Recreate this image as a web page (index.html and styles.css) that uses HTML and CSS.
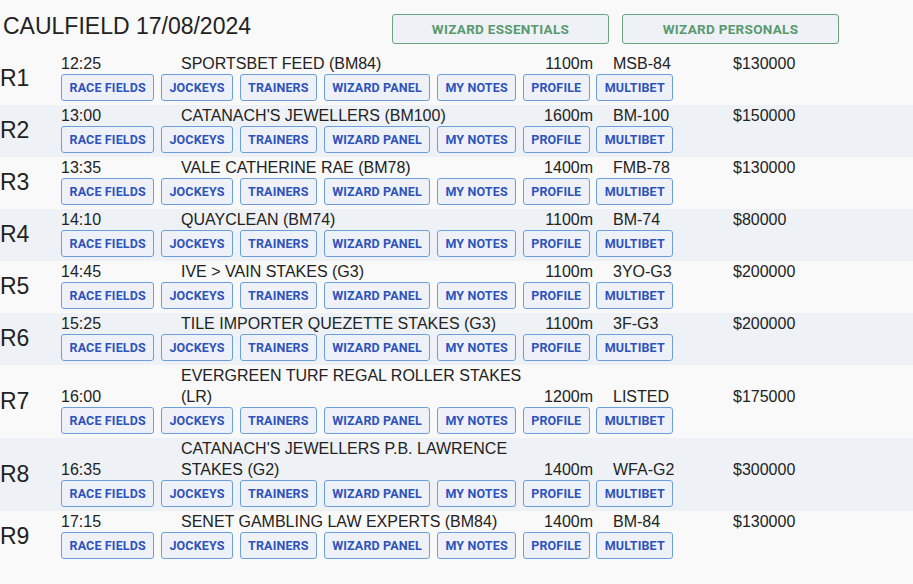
FILE: index.html
```html
<!DOCTYPE html>
<html>
<head>
<meta charset="utf-8">
<link rel="stylesheet" href="styles.css">
</head>
<body>
<div class="page">
  <header class="top">
    <h1 class="title">CAULFIELD 17/08/2024</h1>
    <div class="wiz">
      <button class="wbtn">WIZARD ESSENTIALS</button>
      <button class="wbtn">WIZARD PERSONALS</button>
    </div>
  </header>

  <div class="race">
    <div class="rno">R1</div>
    <div class="body">
      <div class="info"><span class="time">12:25</span><span class="name">SPORTSBET FEED (BM84)</span><span class="dist">1100m</span><span class="cls">MSB-84</span><span class="prize">$130000</span></div>
      <div class="btns"><button class="b">RACE FIELDS</button><button class="b">JOCKEYS</button><button class="b">TRAINERS</button><button class="b">WIZARD PANEL</button><button class="b">MY NOTES</button><button class="b">PROFILE</button><button class="b">MULTIBET</button></div>
    </div>
  </div>

  <div class="race alt">
    <div class="rno">R2</div>
    <div class="body">
      <div class="info"><span class="time">13:00</span><span class="name">CATANACH'S JEWELLERS (BM100)</span><span class="dist">1600m</span><span class="cls">BM-100</span><span class="prize">$150000</span></div>
      <div class="btns"><button class="b">RACE FIELDS</button><button class="b">JOCKEYS</button><button class="b">TRAINERS</button><button class="b">WIZARD PANEL</button><button class="b">MY NOTES</button><button class="b">PROFILE</button><button class="b">MULTIBET</button></div>
    </div>
  </div>

  <div class="race">
    <div class="rno">R3</div>
    <div class="body">
      <div class="info"><span class="time">13:35</span><span class="name">VALE CATHERINE RAE (BM78)</span><span class="dist">1400m</span><span class="cls">FMB-78</span><span class="prize">$130000</span></div>
      <div class="btns"><button class="b">RACE FIELDS</button><button class="b">JOCKEYS</button><button class="b">TRAINERS</button><button class="b">WIZARD PANEL</button><button class="b">MY NOTES</button><button class="b">PROFILE</button><button class="b">MULTIBET</button></div>
    </div>
  </div>

  <div class="race alt">
    <div class="rno">R4</div>
    <div class="body">
      <div class="info"><span class="time">14:10</span><span class="name">QUAYCLEAN (BM74)</span><span class="dist">1100m</span><span class="cls">BM-74</span><span class="prize">$80000</span></div>
      <div class="btns"><button class="b">RACE FIELDS</button><button class="b">JOCKEYS</button><button class="b">TRAINERS</button><button class="b">WIZARD PANEL</button><button class="b">MY NOTES</button><button class="b">PROFILE</button><button class="b">MULTIBET</button></div>
    </div>
  </div>

  <div class="race">
    <div class="rno">R5</div>
    <div class="body">
      <div class="info"><span class="time">14:45</span><span class="name">IVE &gt; VAIN STAKES (G3)</span><span class="dist">1100m</span><span class="cls">3YO-G3</span><span class="prize">$200000</span></div>
      <div class="btns"><button class="b">RACE FIELDS</button><button class="b">JOCKEYS</button><button class="b">TRAINERS</button><button class="b">WIZARD PANEL</button><button class="b">MY NOTES</button><button class="b">PROFILE</button><button class="b">MULTIBET</button></div>
    </div>
  </div>

  <div class="race alt">
    <div class="rno">R6</div>
    <div class="body">
      <div class="info"><span class="time">15:25</span><span class="name">TILE IMPORTER QUEZETTE STAKES (G3)</span><span class="dist">1100m</span><span class="cls">3F-G3</span><span class="prize">$200000</span></div>
      <div class="btns"><button class="b">RACE FIELDS</button><button class="b">JOCKEYS</button><button class="b">TRAINERS</button><button class="b">WIZARD PANEL</button><button class="b">MY NOTES</button><button class="b">PROFILE</button><button class="b">MULTIBET</button></div>
    </div>
  </div>

  <div class="race">
    <div class="rno">R7</div>
    <div class="body">
      <div class="info"><span class="time">16:00</span><span class="name">EVERGREEN TURF REGAL ROLLER STAKES (LR)</span><span class="dist">1200m</span><span class="cls">LISTED</span><span class="prize">$175000</span></div>
      <div class="btns"><button class="b">RACE FIELDS</button><button class="b">JOCKEYS</button><button class="b">TRAINERS</button><button class="b">WIZARD PANEL</button><button class="b">MY NOTES</button><button class="b">PROFILE</button><button class="b">MULTIBET</button></div>
    </div>
  </div>

  <div class="race alt">
    <div class="rno">R8</div>
    <div class="body">
      <div class="info"><span class="time">16:35</span><span class="name">CATANACH'S JEWELLERS P.B. LAWRENCE STAKES (G2)</span><span class="dist">1400m</span><span class="cls">WFA-G2</span><span class="prize">$300000</span></div>
      <div class="btns"><button class="b">RACE FIELDS</button><button class="b">JOCKEYS</button><button class="b">TRAINERS</button><button class="b">WIZARD PANEL</button><button class="b">MY NOTES</button><button class="b">PROFILE</button><button class="b">MULTIBET</button></div>
    </div>
  </div>

  <div class="race">
    <div class="rno">R9</div>
    <div class="body">
      <div class="info"><span class="time">17:15</span><span class="name">SENET GAMBLING LAW EXPERTS (BM84)</span><span class="dist">1400m</span><span class="cls">BM-84</span><span class="prize">$130000</span></div>
      <div class="btns"><button class="b">RACE FIELDS</button><button class="b">JOCKEYS</button><button class="b">TRAINERS</button><button class="b">WIZARD PANEL</button><button class="b">MY NOTES</button><button class="b">PROFILE</button><button class="b">MULTIBET</button></div>
    </div>
  </div>
</div>
</body>
</html>
```

FILE: styles.css
```css
* { box-sizing: border-box; }
html, body {
  margin: 0;
  padding: 0;
  background: #f9f9f9;
}
body {
  font-family: "Liberation Sans", Arial, sans-serif;
  color: #222;
}
.page {
  width: 913px;
}
.top {
  display: flex;
  align-items: flex-start;
  height: 53px;
}
.title {
  margin: 0;
  padding: 11px 0 0 3px;
  font-size: 23px;
  font-weight: 400;
  line-height: 30px;
  width: 392px;
}
.wiz {
  display: flex;
  gap: 13px;
  padding-top: 14px;
}
.wbtn {
  width: 217px;
  height: 30px;
  border: 1px solid #6aa57f;
  border-radius: 3px;
  background: #eef2f7;
  color: #5a9970;
  font-family: Roboto, sans-serif;
  font-weight: 700;
  font-size: 13.5px;
  letter-spacing: 0.3px;
  padding: 0;
}
.race {
  display: flex;
  align-items: center;
  padding-bottom: 4px;
}
.race.alt { background: #eef2f7; }
.rno {
  width: 61px;
  font-size: 23px;
  line-height: 26px;
  padding-top: 2px;
}
.body {
  display: flex;
  flex-direction: column;
}
.info {
  display: grid;
  grid-template-columns: 120px 350px 62px 20px 120px auto;
  align-items: end;
  font-size: 16px;
  line-height: 21px;
}
.time { grid-column: 1; }
.name { grid-column: 2; }
.dist { grid-column: 3; text-align: right; }
.cls { grid-column: 5; }
.prize { grid-column: 6; }
.btns {
  display: flex;
  gap: 6.5px;
}
.b {
  height: 27px;
  padding: 0 7.5px;
  border: 1px solid #6a9fdc;
  border-radius: 3px;
  background: #eef2f8;
  color: #2f52bd;
  font-family: Roboto, sans-serif;
  font-weight: 700;
  font-size: 12.5px;
  letter-spacing: 0.15px;
}
```
